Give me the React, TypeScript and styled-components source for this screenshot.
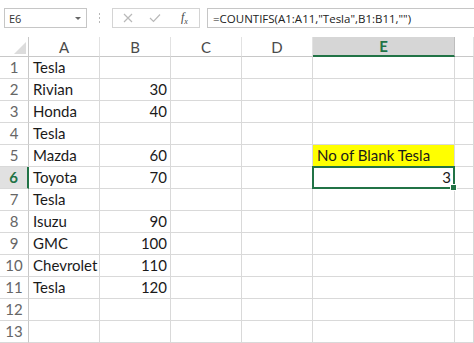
import React from 'react';
import styled, { createGlobalStyle } from 'styled-components';

const GREEN = '#217346';
const GRID = '#d9d9d9';

const GlobalStyle = createGlobalStyle`
  html, body {
    margin: 0;
    padding: 0;
    background: #ffffff;
  }
  body {
    font-family: Lato, "Liberation Sans", sans-serif;
    overflow: hidden;
  }
`;

type RowData = {
  name: string;
  value: string;
};

const rows: RowData[] = [
  { name: 'Tesla', value: '' },
  { name: 'Rivian', value: '30' },
  { name: 'Honda', value: '40' },
  { name: 'Tesla', value: '' },
  { name: 'Mazda', value: '60' },
  { name: 'Toyota', value: '70' },
  { name: 'Tesla', value: '' },
  { name: 'Isuzu', value: '90' },
  { name: 'GMC', value: '100' },
  { name: 'Chevrolet', value: '110' },
  { name: 'Tesla', value: '120' },
  { name: '', value: '' },
  { name: '', value: '' },
];

const columns = ['A', 'B', 'C', 'D', 'E', ''];

const Page = styled.div`
  width: 474px;
  height: 343px;
  overflow: hidden;
  background: #fff;
`;

const Toolbar = styled.div`
  height: 37px;
  display: flex;
  align-items: flex-start;
  padding: 8px 0 0 4px;
  box-sizing: border-box;
`;

const NameBox = styled.div`
  width: 83px;
  height: 20px;
  box-sizing: border-box;
  border: 1px solid #c6c6c6;
  display: flex;
  align-items: center;
  justify-content: space-between;
  padding: 0 5px 0 4px;
  font-family: "Open Sans", "Liberation Sans", sans-serif;
  font-size: 11px;
  color: #333;
`;

const Caret = styled.span`
  width: 0;
  height: 0;
  border-left: 3px solid transparent;
  border-right: 3px solid transparent;
  border-top: 3px solid #666;
`;

const Grip = styled.div`
  width: 25px;
  height: 20px;
  display: flex;
  flex-direction: column;
  align-items: center;
  justify-content: center;
  gap: 2px;
`;

const GripDot = styled.span`
  width: 1px;
  height: 2px;
  background: #b8b8b8;
`;

const IconBox = styled.div`
  width: 88px;
  height: 20px;
  box-sizing: border-box;
  border: 1px solid #d4d4d4;
  display: flex;
  align-items: center;
  padding: 0 0 0 10px;
  gap: 16px;
`;

const Fx = styled.span`
  font-family: "Liberation Serif", serif;
  font-style: italic;
  font-size: 12px;
  color: #444;
  margin-left: 4px;

  sub {
    font-size: 8px;
  }
`;

const FormulaInput = styled.div`
  flex: 1;
  margin-left: 7px;
  height: 20px;
  box-sizing: border-box;
  border: 1px solid #c6c6c6;
  border-right: none;
  display: flex;
  align-items: center;
  padding-left: 5px;
  font-family: "Open Sans", "Liberation Sans", sans-serif;
  font-size: 11.5px;
  color: #222;
  white-space: nowrap;
`;

const Sheet = styled.div`
  display: grid;
  grid-template-columns: 29px 71px 71px 71px 71px 142px 1fr;
  grid-template-rows: 20px repeat(13, 22px);
`;

const Corner = styled.div`
  border-right: 1px solid #c8c8c8;
  border-bottom: 1px solid #c8c8c8;
  display: flex;
  align-items: flex-end;
  justify-content: flex-end;
  padding: 0 2px 2px 0;
`;

const CornerTriangle = styled.span`
  width: 0;
  height: 0;
  border-left: 12px solid transparent;
  border-bottom: 12px solid #dcdcdc;
`;

const ColHeader = styled.div<{ $active?: boolean }>`
  box-sizing: border-box;
  display: flex;
  align-items: center;
  justify-content: center;
  font-size: 15px;
  font-weight: ${(p) => (p.$active ? 700 : 400)};
  color: ${(p) => (p.$active ? GREEN : '#4a4a4a')};
  background: ${(p) => (p.$active ? '#d6d6d6' : '#fff')};
  border-right: 1px solid ${(p) => (p.$active ? '#bdbdbd' : '#e2e2e2')};
  border-bottom: ${(p) => (p.$active ? `2px solid ${GREEN}` : '1px solid #c8c8c8')};
`;

const RowHeader = styled.div<{ $active?: boolean }>`
  box-sizing: border-box;
  display: flex;
  align-items: flex-end;
  justify-content: center;
  padding-bottom: 2px;
  font-size: 15px;
  font-weight: ${(p) => (p.$active ? 700 : 400)};
  color: ${(p) => (p.$active ? GREEN : '#666')};
  background: ${(p) => (p.$active ? '#e1e1e1' : '#fff')};
  border-right: ${(p) => (p.$active ? `2px solid ${GREEN}` : '1px solid #c8c8c8')};
  border-bottom: 1px solid ${GRID};
`;

const Cell = styled.div<{ $align?: 'left' | 'right'; $fill?: string; $selected?: boolean }>`
  position: relative;
  box-sizing: border-box;
  display: flex;
  align-items: flex-end;
  justify-content: ${(p) => (p.$align === 'right' ? 'flex-end' : 'flex-start')};
  padding: 0 3px 2px 4px;
  font-size: 15px;
  color: #1a1a1a;
  white-space: nowrap;
  background: ${(p) => p.$fill ?? 'transparent'};
  border-right: 1px solid ${GRID};
  border-bottom: 1px solid ${GRID};

  ${(p) =>
    p.$selected &&
    `
    &::after {
      content: '';
      position: absolute;
      left: -1px;
      top: -1px;
      right: -1px;
      bottom: -1px;
      border: 2px solid ${GREEN};
      pointer-events: none;
    }
  `}
`;

const FillHandle = styled.span`
  position: absolute;
  right: -3px;
  bottom: -3px;
  width: 5px;
  height: 5px;
  background: ${GREEN};
  border: 1px solid #fff;
  z-index: 2;
`;

const CrossIcon = () => (
  <svg width="10" height="10" viewBox="0 0 10 10">
    <path d="M1 1 L9 9 M9 1 L1 9" stroke="#b9b9b9" strokeWidth="1.2" fill="none" />
  </svg>
);

const CheckIcon = () => (
  <svg width="12" height="10" viewBox="0 0 12 10">
    <path d="M1 5 L4.5 8.5 L11 1.5" stroke="#b9b9b9" strokeWidth="1.2" fill="none" />
  </svg>
);

const App: React.FC = () => {
  return (
    <Page>
      <GlobalStyle />
      <Toolbar>
        <NameBox>
          E6
          <Caret />
        </NameBox>
        <Grip>
          <GripDot />
          <GripDot />
          <GripDot />
        </Grip>
        <IconBox>
          <CrossIcon />
          <CheckIcon />
          <Fx>
            f<sub>x</sub>
          </Fx>
        </IconBox>
        <FormulaInput>=COUNTIFS(A1:A11,"Tesla",B1:B11,"")</FormulaInput>
      </Toolbar>

      <Sheet>
        <Corner>
          <CornerTriangle />
        </Corner>
        {columns.map((col, i) => (
          <ColHeader key={i} $active={col === 'E'}>
            {col}
          </ColHeader>
        ))}

        {rows.map((row, i) => {
          const n = i + 1;
          return (
            <React.Fragment key={n}>
              <RowHeader $active={n === 6}>{n}</RowHeader>
              <Cell>{row.name}</Cell>
              <Cell $align="right">{row.value}</Cell>
              <Cell />
              <Cell />
              {n === 5 ? (
                <Cell $fill="#ffff00">No of Blank Tesla</Cell>
              ) : n === 6 ? (
                <Cell $align="right" $selected>
                  3
                  <FillHandle />
                </Cell>
              ) : (
                <Cell />
              )}
              <Cell />
            </React.Fragment>
          );
        })}
      </Sheet>
    </Page>
  );
};

export default App;
